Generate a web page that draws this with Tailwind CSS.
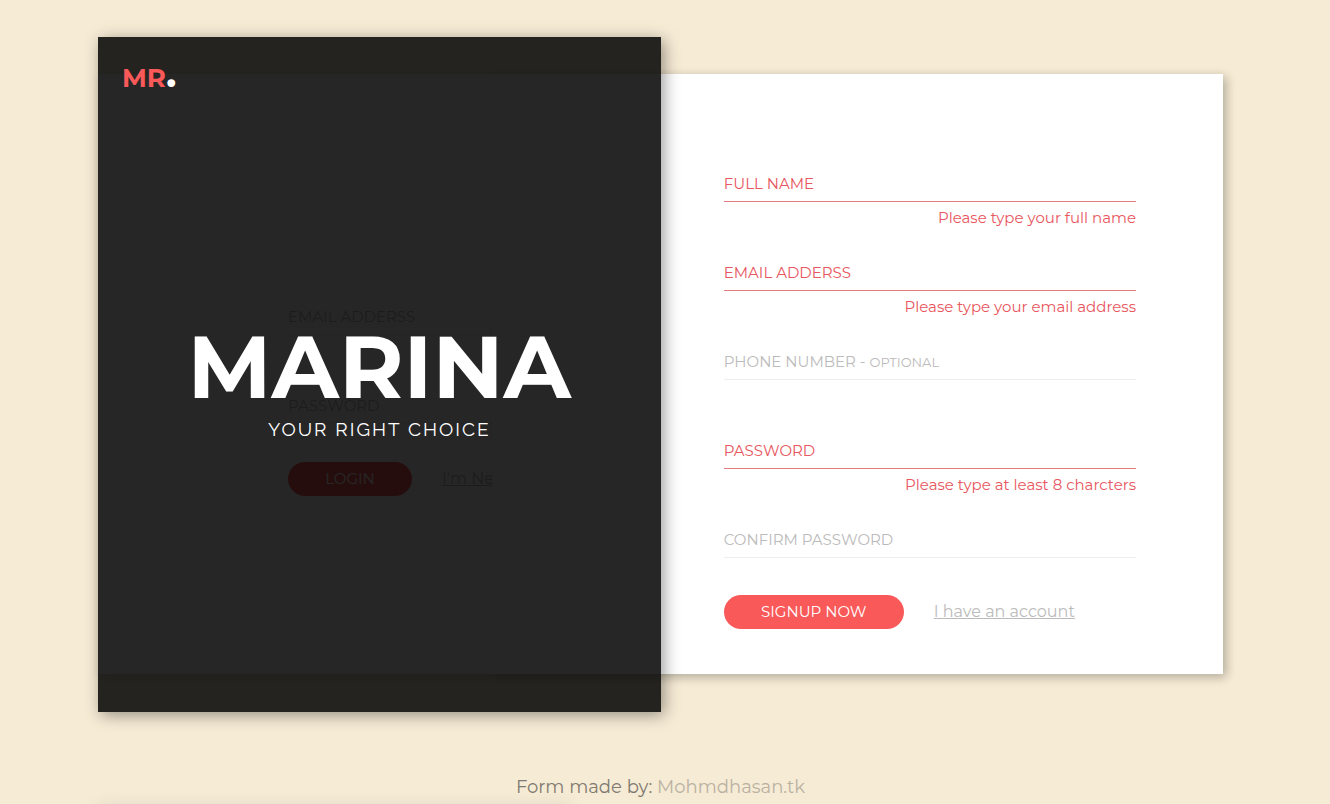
<!DOCTYPE html>
<html lang="en">
<head>
    <meta charset="UTF-8">
    <meta name="viewport" content="width=device-width, initial-scale=1.0">
    <title>Marina - Sign up</title>
    <script src="https://cdn.jsdelivr.net/npm/@tailwindcss/browser@4"></script>
</head>
<body class="min-h-screen overflow-x-hidden bg-[#f6ebd5] pr-[9px] font-['Montserrat','Inter',sans-serif] text-[15px] text-[#bbb]">
    <main class="relative mx-auto mt-[74px] flex h-[600px] w-full max-w-[1125px] bg-white shadow-[3px_3px_10px_rgba(0,0,0,0.15)]">

        <!-- Brand panel, lies over the login form -->
        <div class="absolute -top-[37px] left-0 z-10 flex h-[675px] w-1/2 flex-col bg-black/85 px-6 pt-4 text-white shadow-[3px_3px_15px_rgba(0,0,0,0.4)]">
            <a href="#" class="self-start text-[26px] leading-10 font-bold text-[#f95959]">MR<span class="text-[40px] leading-10 text-white">.</span></a>
            <div class="mt-[223px] text-center">
                <h1 class="text-[88px] leading-[92px] font-bold">MARINA</h1>
                <p class="font-['Raleway','Lato',sans-serif] text-[19px] leading-8 tracking-[2px]">YOUR RIGHT CHOICE</p>
            </div>
        </div>

        <!-- Login -->
        <section class="w-[35%] overflow-hidden pt-[226px] pl-[190px] whitespace-nowrap">
            <form class="w-[412px]">
                <div class="h-[89px]">
                    <div class="grid">
                        <label for="login-email" class="col-start-1 row-start-1 self-center">EMAIL ADDERSS</label>
                        <input id="login-email" type="email" class="col-start-1 row-start-1 h-[35px] border-b border-[#eee] outline-none">
                    </div>
                </div>
                <div class="h-[73px]">
                    <div class="grid">
                        <label for="login-password" class="col-start-1 row-start-1 self-center">PASSWORD</label>
                        <input id="login-password" type="password" class="col-start-1 row-start-1 h-[35px] border-b border-[#eee] outline-none">
                    </div>
                </div>
                <div class="flex items-center gap-[30px]">
                    <button type="submit" class="h-[34px] w-[124px] rounded-full bg-[#f95959] text-white">LOGIN</button>
                    <a href="#" class="text-[16px] underline">I'm New</a>
                </div>
            </form>
        </section>

        <!-- Sign up -->
        <section class="w-[65%] bg-white pt-[93px] pr-[87px] pl-[232px] shadow-[3px_3px_10px_rgba(0,0,0,0.15)]">
            <form>
                <div class="h-[89px] text-[#e8565e]">
                    <div class="grid">
                        <label for="name" class="col-start-1 row-start-1 self-center">FULL NAME</label>
                        <input id="name" type="text" class="col-start-1 row-start-1 h-[35px] border-b border-[#e27c80] outline-none">
                    </div>
                    <p class="mt-1 text-right leading-6">Please type your full name</p>
                </div>
                <div class="h-[89px] text-[#e8565e]">
                    <div class="grid">
                        <label for="email" class="col-start-1 row-start-1 self-center">EMAIL ADDERSS</label>
                        <input id="email" type="email" class="col-start-1 row-start-1 h-[35px] border-b border-[#e27c80] outline-none">
                    </div>
                    <p class="mt-1 text-right leading-6">Please type your email address</p>
                </div>
                <div class="h-[89px]">
                    <div class="grid">
                        <label for="phone" class="col-start-1 row-start-1 self-center">PHONE NUMBER - <small class="text-[13px]">OPTIONAL</small></label>
                        <input id="phone" type="tel" class="col-start-1 row-start-1 h-[35px] border-b border-[#eee] outline-none">
                    </div>
                </div>
                <div class="h-[89px] text-[#e8565e]">
                    <div class="grid">
                        <label for="password" class="col-start-1 row-start-1 self-center">PASSWORD</label>
                        <input id="password" type="password" class="col-start-1 row-start-1 h-[35px] border-b border-[#e27c80] outline-none">
                    </div>
                    <p class="mt-1 text-right leading-6">Please type at least 8 charcters</p>
                </div>
                <div class="h-[72px]">
                    <div class="grid">
                        <label for="confirm" class="col-start-1 row-start-1 self-center">CONFIRM PASSWORD</label>
                        <input id="confirm" type="password" class="col-start-1 row-start-1 h-[35px] border-b border-[#eee] outline-none">
                    </div>
                </div>
                <div class="flex items-center gap-[30px]">
                    <button type="submit" class="h-[34px] w-[180px] rounded-full bg-[#f95959] text-white">SIGNUP NOW</button>
                    <a href="#" class="text-[16px] underline">I have an account</a>
                </div>
            </form>
        </section>
    </main>

    <footer class="mt-[99px] text-center text-[18px] leading-7 text-[#7f7a70]">
        Form made by: <a href="#" class="text-[#bab1a2]">Mohmdhasan.tk</a>
    </footer>

    <!-- Next card, only its shadow shows above the fold -->
    <div class="mx-auto mt-2 w-full max-w-[1125px]">
        <div class="h-10 w-[42%] bg-white shadow-[0_0_20px_rgba(0,0,0,0.12)]"></div>
    </div>
</body>
</html>
